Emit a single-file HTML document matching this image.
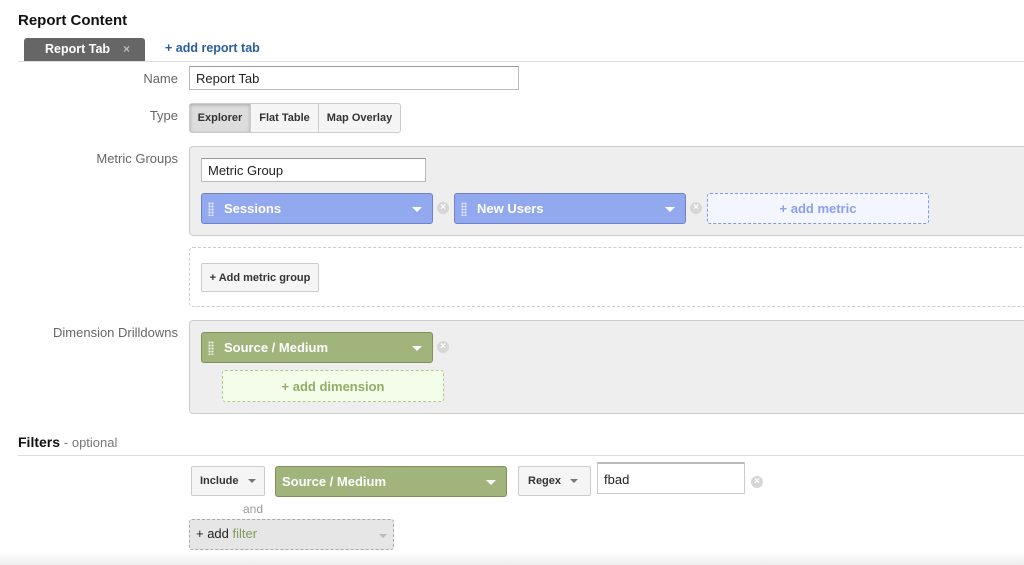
<!DOCTYPE html>
<html><head><style>
*{box-sizing:border-box;margin:0;padding:0}
body{width:1024px;height:565px;background:#fff;font-family:"Liberation Sans",Arial,sans-serif;position:relative;overflow:hidden;color:#222}
.a{position:absolute}
.lbl{position:absolute;right:846px;font-size:13px;color:#666;text-align:right;white-space:nowrap}
.inp{position:absolute;border:1px solid #bbb;border-top-color:#999;background:#fff;font-size:13px;padding-left:6px;display:flex;align-items:center}
.chip{position:absolute;border-radius:3px;color:#fff;font-weight:bold;font-size:13px;display:flex;align-items:center}
.dots{width:6px;height:14px;margin:0 10px 0 6px;background-image:radial-gradient(circle,rgba(255,255,255,.8) 1px,transparent 1.2px);background-size:3px 3px}
.arr{position:absolute;right:10px;top:50%;margin-top:-2px;border-left:5px solid transparent;border-right:5px solid transparent;border-top:5px solid #fff}
.x{position:absolute;width:12px;height:12px;border-radius:50%;background:#d6d6d6;color:#fff;font-size:10px;line-height:12px;text-align:center;font-weight:bold}
.btn{position:absolute;background:#f5f5f5;border:1px solid #ccc;border-radius:2px;font-size:11px;font-weight:bold;color:#333;display:flex;align-items:center}
.darr{display:inline-block;border-left:4px solid transparent;border-right:4px solid transparent;border-top:4px solid #777;margin-left:9px}
</style></head><body>
<div class="a" style="left:18px;top:12px;font-size:15px;font-weight:bold;color:#111">Report Content</div>
<div class="a" style="left:24px;top:38px;width:121px;height:23px;background:#666;border-radius:3px 3px 0 0;color:#fff;font-size:12.5px;font-weight:bold;padding:4px 0 0 21px">Report Tab<span style="position:absolute;left:99px;top:4px;color:#bbb;font-size:12px">×</span></div>
<div class="a" style="left:165px;top:41px;font-size:12.5px;font-weight:bold;color:#2a5f9e">+ add report tab</div>
<div class="a" style="left:18px;top:61px;width:1006px;height:1px;background:#ddd"></div>

<div class="lbl" style="top:71px">Name</div>
<div class="inp" style="left:189px;top:66px;width:330px;height:24px">Report Tab</div>

<div class="lbl" style="top:108px">Type</div>
<div class="a" style="left:189px;top:103px;width:212px;height:30px;border:1px solid #ccc;border-radius:3px;background:#f5f5f5;display:flex;font-size:11px;font-weight:bold;color:#333">
<div style="width:61px;background:#ddd;box-shadow:inset 0 1px 3px rgba(0,0,0,.25);display:flex;align-items:center;justify-content:center;border-right:1px solid #ccc">Explorer</div>
<div style="width:68px;display:flex;align-items:center;justify-content:center;border-right:1px solid #ccc">Flat Table</div>
<div style="flex:1;display:flex;align-items:center;justify-content:center">Map Overlay</div></div>

<div class="lbl" style="top:151px">Metric Groups</div>
<div class="a" style="left:189px;top:146px;width:840px;height:90px;background:#eee;border:1px solid #ccc;border-radius:4px"></div>
<div class="inp" style="left:201px;top:158px;width:225px;height:24px">Metric Group</div>
<div class="chip" style="left:201px;top:193px;width:232px;height:31px;background:#92a8ef;border:1px solid #6f82c8"><span class="dots"></span>Sessions<span class="arr"></span></div>
<div class="x" style="left:437px;top:202px">×</div>
<div class="chip" style="left:454px;top:193px;width:232px;height:31px;background:#92a8ef;border:1px solid #6f82c8"><span class="dots"></span>New Users<span class="arr"></span></div>
<div class="x" style="left:690px;top:202px">×</div>
<div class="chip" style="left:707px;top:193px;width:222px;height:31px;background:#f3f5ff;border:1px dashed #7f97e6;color:#8ba0ea;justify-content:center">+ add metric</div>

<div class="a" style="left:189px;top:247px;width:840px;height:60px;border:1px dashed #ccc;border-radius:4px"></div>
<div class="btn" style="left:201px;top:263px;width:118px;height:29px;justify-content:center">+ Add metric group</div>

<div class="lbl" style="top:325px">Dimension Drilldowns</div>
<div class="a" style="left:189px;top:320px;width:840px;height:94px;background:#eee;border:1px solid #ccc;border-radius:4px"></div>
<div class="chip" style="left:201px;top:332px;width:232px;height:31px;background:#a1b47b;border:1px solid #7f905a"><span class="dots"></span>Source / Medium<span class="arr"></span></div>
<div class="x" style="left:437px;top:341px">×</div>
<div class="chip" style="left:222px;top:370px;width:222px;height:32px;background:#f4fde9;border:1px dashed #b3c882;color:#93ad66;justify-content:center">+ add dimension</div>

<div class="a" style="left:18px;top:434px;font-size:14px;font-weight:bold;color:#111">Filters <span style="font-weight:normal;font-size:13px;color:#777">- optional</span></div>
<div class="a" style="left:18px;top:455px;width:1006px;height:1px;background:#ddd"></div>

<div class="btn" style="left:191px;top:466px;width:74px;height:30px;padding-left:8px">Include<span class="darr"></span></div>
<div class="chip" style="left:275px;top:466px;width:232px;height:31px;background:#a1b47b;border:1px solid #7f905a;padding-left:6px;font-size:13px">Source / Medium<span class="arr"></span></div>
<div class="btn" style="left:518px;top:466px;width:73px;height:30px;padding-left:9px">Regex<span class="darr"></span></div>
<div class="inp" style="left:597px;top:462px;width:148px;height:32px;border:1px solid #ccc;border-top:2px solid #bbb;align-items:flex-start;padding-top:8px">fbad</div>
<div class="x" style="left:751px;top:476px">×</div>
<div class="a" style="left:243px;top:502px;font-size:12px;color:#999">and</div>
<div class="a" style="left:189px;top:519px;width:205px;height:31px;background:#e6e6e6;border:1px dashed #aaa;border-radius:3px;font-size:13px;padding:6px 0 0 6px;color:#222">+ add <span style="color:#7f9a5a">filter</span><span style="position:absolute;right:6px;top:14px;border-left:4px solid transparent;border-right:4px solid transparent;border-top:4px solid #bbb"></span></div>
<div class="a" style="left:0;top:552px;width:1024px;height:13px;background:linear-gradient(#fff,#eee)"></div>
</body></html>
